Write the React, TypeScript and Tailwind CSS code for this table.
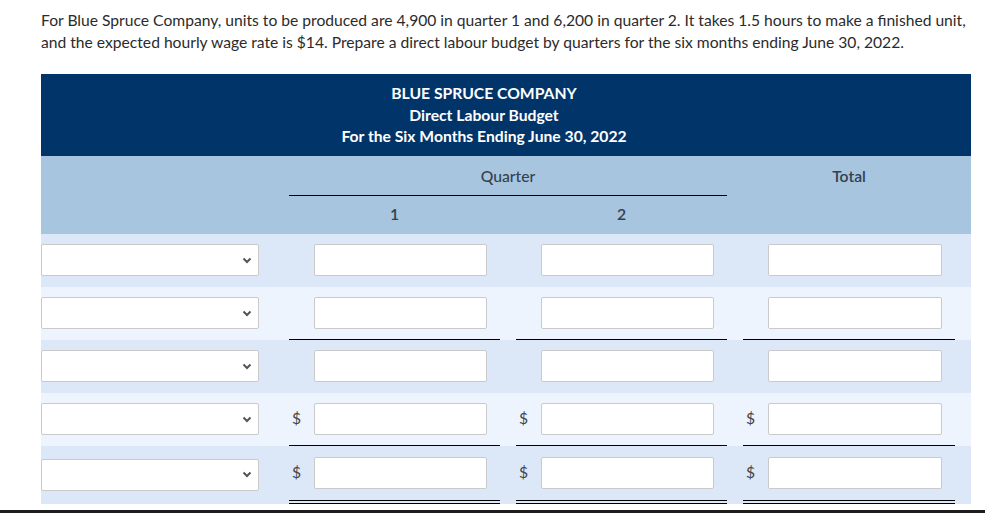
import React from "react";

const rows = [
  { bg: "bg-[#dce8f7]", dollar: false, line: "" },
  { bg: "bg-[#edf4fd]", dollar: false, line: "border-b border-black" },
  { bg: "bg-[#dce8f7]", dollar: false, line: "" },
  { bg: "bg-[#edf4fd]", dollar: true, line: "border-b border-black" },
  { bg: "bg-[#dce8f7]", dollar: true, line: "border-b-4 border-double border-black" },
];

function Chevron() {
  return (
    <svg width="10" height="7" viewBox="0 0 10 7" className="text-[#555]">
      <polyline points="1.5,1.5 5,5 8.5,1.5" fill="none" stroke="currentColor" strokeWidth="2" />
    </svg>
  );
}

function AmountCell({ dollar, line }: { dollar: boolean; line: string }) {
  return (
    <div className={`flex h-full items-center pr-[13px] ${line}`}>
      <span className="w-[25px] pl-[3px] text-[15.7px] text-[#444]">{dollar ? "$" : ""}</span>
      <div className="h-[32px] flex-1 rounded-[2px] border border-[#cacaca] bg-white" />
    </div>
  );
}

export default function App() {
  return (
    <div className="flex h-[513px] w-[985px] flex-col bg-white font-['Lato',sans-serif] text-[#2b2b2b]">
      <div className="pl-[41px] pr-[4px] pt-[9px]">
        <p className="text-[15.65px] leading-[22px]">
          For Blue Spruce Company, units to be produced are 4,900 in quarter 1 and 6,200 in quarter 2. It takes 1.5 hours to make a finished unit,
          and the expected hourly wage rate is $14. Prepare a direct labour budget by quarters for the six months ending June 30, 2022.
        </p>

        <div className="mt-[21px] w-[930px]">
          <div className="bg-[#01356a] pb-[8px] pr-[44px] pt-[9px] text-center text-[15.7px] font-bold leading-[21.5px] text-white">
            <div>BLUE SPRUCE COMPANY</div>
            <div>Direct Labour Budget</div>
            <div>For the Six Months Ending June 30, 2022</div>
          </div>

          <div className="grid grid-cols-[232px_211px_211px_212px] gap-x-[16px] bg-[#a7c5df] pr-[16px] text-[15.7px] text-[#33414f]">
            <div className="row-span-2" />
            <div className="col-span-2 border-b border-black pb-[8px] pt-[10px] text-center font-medium leading-[21px]">Quarter</div>
            <div className="row-span-2 pt-[10px] text-center font-semibold leading-[21px]">Total</div>
            <div className="flex h-[38px] items-center justify-center font-semibold">1</div>
            <div className="flex h-[38px] items-center justify-center font-semibold">2</div>
          </div>

          {rows.map((r, i) => (
            <div
              key={i}
              className={`grid grid-cols-[232px_211px_211px_212px] gap-x-[16px] pr-[16px] ${r.bg} ${i === 4 ? "h-[58px]" : "h-[53px]"}`}
            >
              <div className="flex items-center">
                <div className="flex h-[32px] w-[218px] items-center justify-end rounded-[2px] border border-[#cacaca] bg-white pr-[6px]">
                  <Chevron />
                </div>
              </div>
              <AmountCell dollar={r.dollar} line={r.line} />
              <AmountCell dollar={r.dollar} line={r.line} />
              <AmountCell dollar={r.dollar} line={r.line} />
            </div>
          ))}
        </div>
      </div>
      <div className="mt-auto h-[3px] w-full bg-[#1c1c1c]" />
    </div>
  );
}
